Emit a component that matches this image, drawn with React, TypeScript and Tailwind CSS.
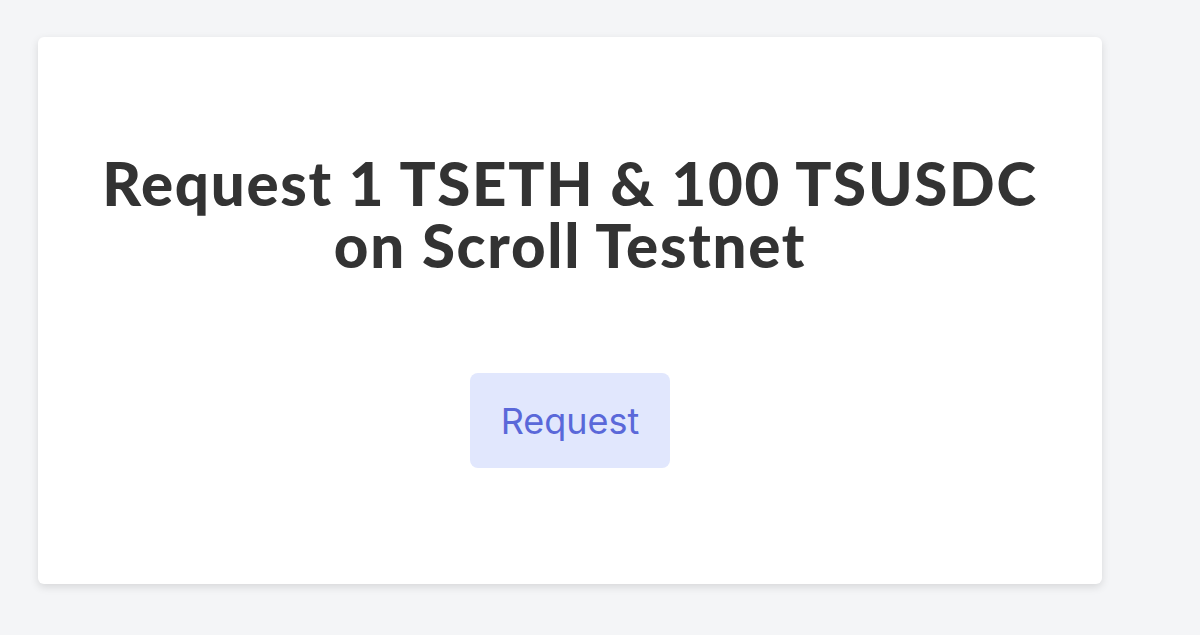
import React from 'react';

const App: React.FC = () => {
  return (
    <div className="min-h-screen bg-[#f4f5f7] pt-[37px] pl-[38px]">
      {/* Faucet card */}
      <div className="w-[1064px] h-[547px] bg-white rounded-md shadow-[0_3px_8px_rgba(0,0,0,0.12)] flex flex-col items-center pt-[115px]">
        <h1
          className="text-[60px] leading-[62px] font-black text-[#333333] text-center tracking-[1.7px]"
          style={{ fontFamily: 'Lato, "Noto Sans", sans-serif' }}
        >
          Request 1 TSETH &amp; 100 TSUSDC
          <br />
          on Scroll Testnet
        </h1>
        <button
          className="mt-[97px] w-[200px] h-[95px] rounded-lg bg-[#e1e7fd] text-[#5a68d9] text-[36px] flex items-center justify-center"
          style={{ fontFamily: 'Inter, "Noto Sans", sans-serif' }}
        >
          Request
        </button>
      </div>
    </div>
  );
};

export default App;
